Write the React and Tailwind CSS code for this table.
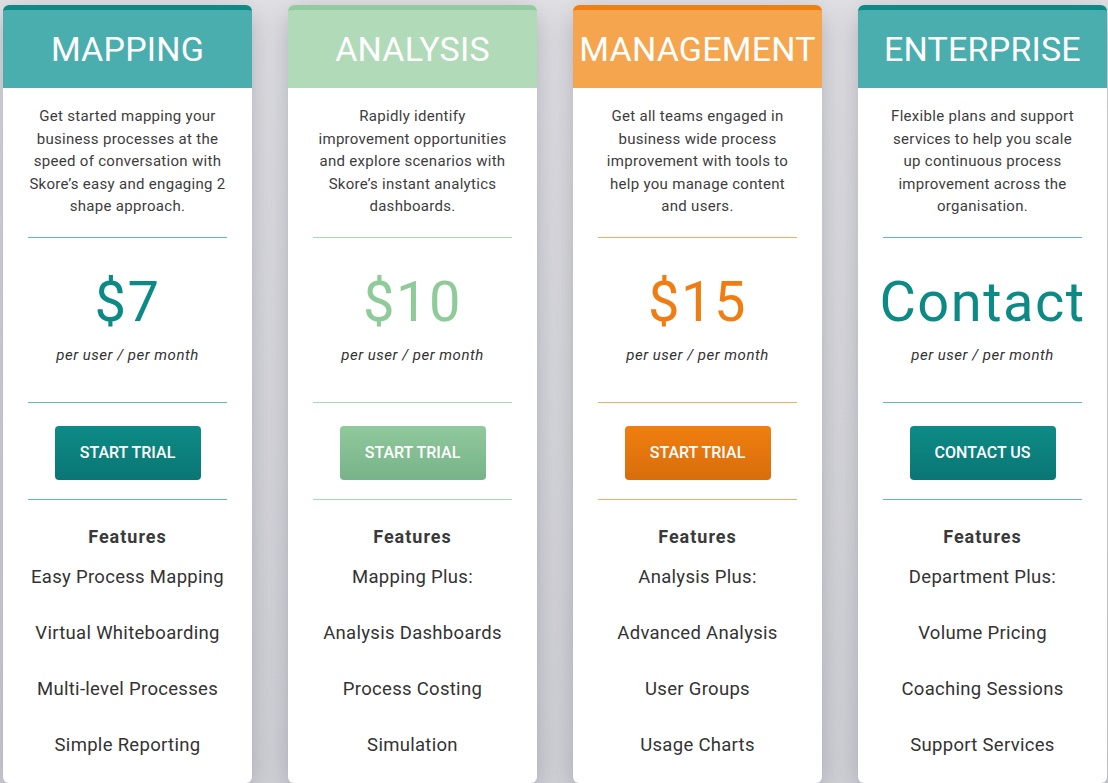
import React from 'react';

const plans = [
  {
    title: 'MAPPING',
    desc: ['Get started mapping your', 'business processes at the', 'speed of conversation with', 'Skore’s easy and engaging 2', 'shape approach.'],
    price: '$7',
    cta: 'START TRIAL',
    features: ['Easy Process Mapping', 'Virtual Whiteboarding', 'Multi-level Processes', 'Simple Reporting'],
    header: 'bg-[#4aaeae] border-[#0e8a86]',
    line: 'bg-[#5cbdb8]',
    price_c: 'text-[#0b8a86]',
    btn: 'bg-gradient-to-b from-[#0e8b86] to-[#097674]',
  },
  {
    title: 'ANALYSIS',
    desc: ['Rapidly identify', 'improvement opportunities', 'and explore scenarios with', 'Skore’s instant analytics', 'dashboards.'],
    price: '$10',
    cta: 'START TRIAL',
    features: ['Mapping Plus:', 'Analysis Dashboards', 'Process Costing', 'Simulation'],
    header: 'bg-[#b0dab8] border-[#91cb9f]',
    line: 'bg-[#a9d9b3]',
    price_c: 'text-[#8ecb99]',
    btn: 'bg-gradient-to-b from-[#8fc99c] to-[#78b288]',
  },
  {
    title: 'MANAGEMENT',
    desc: ['Get all teams engaged in', 'business wide process', 'improvement with tools to', 'help you manage content', 'and users.'],
    price: '$15',
    cta: 'START TRIAL',
    features: ['Analysis Plus:', 'Advanced Analysis', 'User Groups', 'Usage Charts'],
    header: 'bg-[#f5a54e] border-[#f07f12]',
    line: 'bg-[#f6aa62]',
    price_c: 'text-[#ef7d12]',
    btn: 'bg-gradient-to-b from-[#f07f10] to-[#d86d0b]',
  },
  {
    title: 'ENTERPRISE',
    desc: ['Flexible plans and support', 'services to help you scale', 'up continuous process', 'improvement across the', 'organisation.'],
    price: 'Contact',
    cta: 'CONTACT US',
    features: ['Department Plus:', 'Volume Pricing', 'Coaching Sessions', 'Support Services'],
    header: 'bg-[#4aaeae] border-[#0e8a86]',
    line: 'bg-[#5cbdb8]',
    price_c: 'text-[#0b8a86]',
    btn: 'bg-gradient-to-b from-[#0e8b86] to-[#097674]',
  },
];

function Card({ plan }) {
  return (
    <div className="w-[249px] shrink-0 rounded-md bg-white shadow-[0_8px_28px_rgba(70,70,90,0.35)] flex flex-col">
      <div className={`h-[83px] rounded-t-md border-t-[5px] flex items-center justify-center ${plan.header}`}>
        <h2 className="text-white text-[34px] font-normal tracking-[0.2px] leading-none">{plan.title}</h2>
      </div>
      <div className="px-[25px] flex flex-col items-center text-center">
        <div className="pt-[17px] h-[130px] text-[15px] leading-[22.6px] tracking-[0.3px] text-[#3d3d3d]">
          {plan.desc.map(l => (
            <div key={l} className="whitespace-nowrap">{l}</div>
          ))}
        </div>
        <div className={`w-full h-px mt-[19px] ${plan.line}`} />
        <div className={`mt-[34px] text-[56px] leading-[60px] tracking-[1.5px] ${plan.price_c}`}>{plan.price}</div>
        <div className="mt-[13px] text-[15px] leading-[20px] tracking-[0.5px] italic text-[#333]">per user / per month</div>
        <div className={`w-full h-px mt-[37px] ${plan.line}`} />
        <button className={`mt-[23px] w-[146px] h-[54px] rounded-[4px] text-white text-[16px] font-medium ${plan.btn}`}>
          {plan.cta}
        </button>
        <div className={`w-full h-px mt-[19px] ${plan.line}`} />
        <div className="mt-[25px] text-[18px] leading-[24px] tracking-[1px] font-bold text-[#3a3a3a]">Features</div>
        <ul className="mt-[16px] flex flex-col gap-[32px] pb-[22px]">
          {plan.features.map(f => (
            <li key={f} className="text-[18.5px] leading-[24px] tracking-[0.3px] text-[#333]">{f}</li>
          ))}
        </ul>
      </div>
    </div>
  );
}

export default function App() {
  return (
    <main
      className="w-[1108px] h-[783px] overflow-hidden bg-gradient-to-b from-[#e2e2e6] to-[#d4d4da] flex gap-[36px] pl-[3px] pt-[5px]"
      style={{ fontFamily: 'Roboto, "Liberation Sans", sans-serif' }}
    >
      {plans.map(p => <Card key={p.title} plan={p} />)}
    </main>
  );
}
